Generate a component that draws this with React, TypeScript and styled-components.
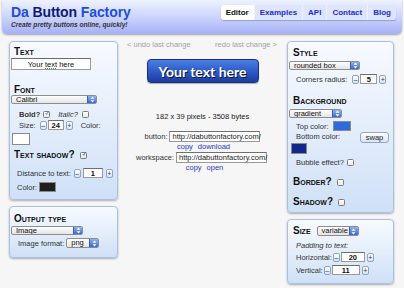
import styled, { createGlobalStyle } from "styled-components";

const GlobalStyle = createGlobalStyle`
  html, body {
    margin: 0;
    padding: 0;
    background: #f6f6f6;
  }
  body {
    width: 404px;
    height: 288px;
    overflow: hidden;
    font-family: "Liberation Sans", Arial, sans-serif;
    font-size: 7.5px;
    color: #333;
  }
`;

const Page = styled.div`
  display: flex;
  flex-direction: column;
  width: 404px;
  height: 288px;
`;

const Header = styled.div`
  display: flex;
  justify-content: space-between;
  align-items: flex-start;
  height: 34px;
  margin: 0 2px;
  padding: 0 6px 0 9px;
  box-sizing: border-box;
  border-radius: 0 0 5px 5px;
  background: linear-gradient(to bottom, #eef2ff 0%, #c9d1fb 55%, #a5b0f6 100%);
  box-shadow: 0 1px 2px rgba(0, 0, 0, 0.35);
`;

const Brand = styled.div`
  display: flex;
  flex-direction: column;
  padding-top: 5px;
`;

const Title = styled.div`
  font-size: 14px;
  font-weight: bold;
  line-height: 14px;
  letter-spacing: -0.1px;
`;

const TitleWord = styled.span<{ $dark?: boolean }>`
  color: ${(p) => (p.$dark ? "#0b1c78" : "#1d4fd6")};
`;

const Tagline = styled.div`
  margin-top: 2px;
  font-size: 6.6px;
  font-style: italic;
  font-weight: bold;
  color: #333;
`;

const Nav = styled.div`
  display: flex;
  margin-top: 5px;
  height: 15px;
  border-radius: 3px;
  background: #dfe5ff;
  box-shadow: 0 1px 1px rgba(60, 70, 150, 0.35);
  overflow: hidden;
`;

const Tab = styled.div<{ $active?: boolean }>`
  display: flex;
  align-items: center;
  padding: 0 5px;
  font-size: 8px;
  font-weight: bold;
  color: ${(p) => (p.$active ? "#111" : "#1a2ed0")};
  background: ${(p) => (p.$active ? "#fff" : "transparent")};
  border-left: ${(p) => (p.$active ? "none" : "1px solid #eef1ff")};
`;

const Main = styled.div`
  display: flex;
  align-items: flex-start;
  padding: 7px 10px 0 9px;
`;

const SideCol = styled.div<{ $w: number }>`
  display: flex;
  flex-direction: column;
  gap: 6px;
  width: ${(p) => p.$w}px;
  flex-shrink: 0;
`;

const Panel = styled.div<{ $pb: number }>`
  display: flex;
  flex-direction: column;
  padding-bottom: ${(p) => p.$pb}px;
  border: 1px solid #a9c0e2;
  border-radius: 4px;
  background: linear-gradient(to bottom, #f7faff 0%, #e4eefb 50%, #cfe0f7 100%);
  box-shadow: 0 1px 2px rgba(0, 0, 0, 0.3);
`;

const Heading = styled.div<{ $mt: number; $ml?: number }>`
  display: flex;
  align-items: center;
  gap: 5px;
  height: 10px;
  margin-top: ${(p) => p.$mt}px;
  margin-left: ${(p) => p.$ml ?? 4}px;
  font-size: 10px;
  font-weight: bold;
  font-variant: small-caps;
  line-height: 10px;
  color: #111;
`;

const Row = styled.div<{ $mt: number; $ml: number; $h?: number; $top?: boolean }>`
  display: flex;
  align-items: ${(p) => (p.$top ? "flex-start" : "center")};
  height: ${(p) => p.$h ?? 10}px;
  margin-top: ${(p) => p.$mt}px;
  margin-left: ${(p) => p.$ml}px;
  white-space: nowrap;
`;

const Label = styled.span<{ $bold?: boolean; $italic?: boolean; $mr?: number }>`
  margin-right: ${(p) => p.$mr ?? 3}px;
  font-weight: ${(p) => (p.$bold ? "bold" : "normal")};
  font-style: ${(p) => (p.$italic ? "italic" : "normal")};
  line-height: 9px;
  color: #333;
`;

const TextField = styled.div<{ $w: number; $mt: number; $ml: number }>`
  display: flex;
  align-items: center;
  justify-content: center;
  box-sizing: border-box;
  width: ${(p) => p.$w}px;
  height: 12px;
  margin-top: ${(p) => p.$mt}px;
  margin-left: ${(p) => p.$ml}px;
  background: #fff;
  border: 1px solid #9a9a9a;
  border-top-color: #6d6d6d;
  color: #111;
`;

const Spell = styled.span`
  text-decoration: underline dotted #3a9a3a;
`;

const SelectBox = styled.div<{ $w: number; $h?: number; $mt?: number; $ml?: number }>`
  display: flex;
  align-items: center;
  box-sizing: border-box;
  width: ${(p) => p.$w}px;
  height: ${(p) => p.$h ?? 9}px;
  margin-top: ${(p) => p.$mt ?? 0}px;
  margin-left: ${(p) => p.$ml ?? 0}px;
  border: 1px solid #8d8d8d;
  border-radius: 2px;
  background: linear-gradient(to bottom, #ffffff, #e4e4e4);
  overflow: hidden;
  flex-shrink: 0;
  font-size: 7.5px;
  font-weight: normal;
  font-variant: normal;
`;

const SelectText = styled.span`
  flex: 1;
  padding-left: 4px;
  color: #111;
  line-height: 8px;
`;

const SelectCap = styled.span`
  display: flex;
  align-items: center;
  justify-content: center;
  width: 8px;
  height: 100%;
  background: linear-gradient(to bottom, #8db4f4, #3568d8);
  border-left: 1px solid #3c5fb0;
`;

const StepBtn = styled.span<{ $ml?: number }>`
  display: flex;
  align-items: center;
  justify-content: center;
  box-sizing: border-box;
  width: 7px;
  height: 9px;
  margin-left: ${(p) => p.$ml ?? 0}px;
  border: 1px solid #8fa3c4;
  border-radius: 2px;
  background: linear-gradient(to bottom, #ffffff, #d5e2f4);
  font-size: 7px;
  line-height: 7px;
  color: #334;
`;

const NumBox = styled.span<{ $w: number; $ml?: number }>`
  display: flex;
  align-items: center;
  justify-content: center;
  box-sizing: border-box;
  width: ${(p) => p.$w}px;
  height: 10px;
  margin-left: ${(p) => p.$ml ?? 1}px;
  background: #fff;
  border: 1px solid #9a9a9a;
  border-top-color: #6d6d6d;
  font-weight: bold;
  color: #111;
`;

const Swatch = styled.div<{ $color: string; $w: number; $h: number; $mt?: number; $ml?: number }>`
  box-sizing: border-box;
  width: ${(p) => p.$w}px;
  height: ${(p) => p.$h}px;
  margin-top: ${(p) => p.$mt ?? 0}px;
  margin-left: ${(p) => p.$ml ?? 0}px;
  background: ${(p) => p.$color};
  border: 1px solid #8a8a8a;
  flex-shrink: 0;
`;

const Box = styled.span<{ $ml?: number }>`
  display: flex;
  align-items: center;
  justify-content: center;
  box-sizing: border-box;
  width: 7px;
  height: 7px;
  margin-left: ${(p) => p.$ml ?? 0}px;
  border: 1px solid #7d7d7d;
  border-radius: 1.5px;
  background: linear-gradient(to bottom, #ffffff, #e8e8e8);
  overflow: visible;
  flex-shrink: 0;
`;

const SwapButton = styled.span`
  display: flex;
  align-items: center;
  justify-content: center;
  box-sizing: border-box;
  width: 29px;
  height: 11px;
  margin-left: auto;
  margin-right: 4px;
  border: 1px solid #94a6c6;
  border-radius: 3px;
  background: linear-gradient(to bottom, #ffffff, #d6e3f6);
  color: #222;
  font-size: 7.5px;
`;

const Center = styled.div`
  display: flex;
  flex-direction: column;
  align-items: center;
  flex: 1;
`;

const UndoBar = styled.div`
  display: flex;
  justify-content: space-between;
  align-self: stretch;
  height: 8px;
  padding: 0 10px 0 9px;
  line-height: 8px;
  color: #a3a3a3;
`;

const BigButton = styled.div`
  display: flex;
  align-items: center;
  justify-content: center;
  box-sizing: border-box;
  width: 112px;
  height: 24px;
  margin-top: 10px;
  border: 1px solid #1b2f86;
  border-radius: 4px;
  background: linear-gradient(to bottom, #4a7fe2 0%, #2f5cc8 50%, #1c3c9c 100%);
  box-shadow: 0 1px 1px rgba(0, 0, 0, 0.3);
  font-family: Lato, "Open Sans", sans-serif;
  font-size: 14px;
  font-weight: bold;
  color: #fff;
  text-shadow: 1px 1px 0 #0b1540;
`;

const Info = styled.div`
  margin-top: 29px;
  height: 10px;
  line-height: 10px;
  color: #222;
`;

const UrlRow = styled.div<{ $mt: number; $shift?: number }>`
  display: flex;
  align-items: center;
  gap: 2px;
  height: 11px;
  margin-top: ${(p) => p.$mt}px;
  transform: translateX(${(p) => p.$shift ?? 0}px);
  white-space: nowrap;
`;

const UrlBox = styled.span`
  display: flex;
  align-items: center;
  box-sizing: border-box;
  width: 91px;
  height: 11px;
  padding-left: 2px;
  background: #fff;
  border: 1px solid #999;
  border-top-color: #707070;
  color: #222;
`;

const LinkRow = styled.div<{ $shift?: number }>`
  display: flex;
  gap: 5px;
  height: 10px;
  line-height: 10px;
  transform: translateX(${(p) => p.$shift ?? 0}px);
`;

const Link = styled.span`
  color: #2536c8;
`;

function Arrows() {
  return (
    <svg width="5" height="7" viewBox="0 0 5 7">
      <path d="M2.5 0.5 L4.5 2.8 L0.5 2.8 Z M2.5 6.5 L4.5 4.2 L0.5 4.2 Z" fill="#fff" />
    </svg>
  );
}

function Select({ text, w, h, mt, ml }: { text: string; w: number; h?: number; mt?: number; ml?: number }) {
  return (
    <SelectBox $w={w} $h={h} $mt={mt} $ml={ml}>
      <SelectText>{text}</SelectText>
      <SelectCap>
        <Arrows />
      </SelectCap>
    </SelectBox>
  );
}

function Check({ on, ml }: { on?: boolean; ml?: number }) {
  return (
    <Box $ml={ml}>
      {on && (
        <svg width="8" height="8" viewBox="0 0 8 8" style={{ marginTop: -2, marginLeft: 1 }}>
          <path d="M1 4.2 L3.2 6.5 L7.2 0.8" stroke="#1d3fb0" strokeWidth="1.5" fill="none" />
        </svg>
      )}
    </Box>
  );
}

function Stepper({ value, w, gap = 1 }: { value: string; w: number; gap?: number }) {
  return (
    <>
      <StepBtn>–</StepBtn>
      <NumBox $w={w} $ml={gap}>{value}</NumBox>
      <StepBtn $ml={gap + 1}>+</StepBtn>
    </>
  );
}

export default function App() {
  return (
    <>
      <GlobalStyle />
      <Page>
        <Header>
          <Brand>
            <Title>
              <TitleWord>Da </TitleWord>
              <TitleWord $dark>Button</TitleWord>
              <TitleWord> Factory</TitleWord>
            </Title>
            <Tagline>Create pretty buttons online, quickly!</Tagline>
          </Brand>
          <Nav>
            <Tab $active>Editor</Tab>
            <Tab>Examples</Tab>
            <Tab>API</Tab>
            <Tab>Contact</Tab>
            <Tab>Blog</Tab>
          </Nav>
        </Header>

        <Main>
          <SideCol $w={109}>
            <Panel $pb={7}>
              <Heading $mt={5}>Text</Heading>
              <TextField $w={80} $mt={1} $ml={1}>
                <span>
                  Your <Spell>text</Spell> here
                </span>
              </TextField>

              <Heading $mt={15}>Font</Heading>
              <Select text="Calibri" w={86} mt={0} ml={1} />
              <Row $mt={5} $ml={9}>
                <Label $bold>Bold?</Label>
                <Check on />
                <Label $italic style={{ marginLeft: 8 }}>Italic?</Label>
                <Check ml={1} />
              </Row>
              <Row $mt={1} $ml={9}>
                <Label $mr={4}>Size:</Label>
                <Stepper value="24" w={16} />
                <Label style={{ marginLeft: 8 }}>Color:</Label>
              </Row>
              <Swatch $color="#fff" $w={18} $h={12} $mt={3} $ml={2} />

              <Heading $mt={5}>
                Text shadow?
                <Check on />
              </Heading>
              <Row $mt={8} $ml={7}>
                <Label $mr={3}>Distance to text:</Label>
                <Stepper value="1" w={20} gap={2} />
              </Row>
              <Row $mt={4} $ml={7}>
                <Label $mr={2}>Color:</Label>
                <Swatch $color="#1f1f1f" $w={17} $h={10} />
              </Row>
            </Panel>

            <Panel $pb={9}>
              <Heading $mt={7}>Output type</Heading>
              <Select text="Image" w={72} mt={2} ml={1} />
              <Row $mt={3} $ml={8}>
                <Label $mr={2}>Image format:</Label>
                <Select text="png" w={33} h={10} />
              </Row>
            </Panel>
          </SideCol>

          <Center>
            <UndoBar>
              <span>&lt; undo last change</span>
              <span>redo last change &gt;</span>
            </UndoBar>
            <BigButton>Your text here</BigButton>
            <Info>182 x 39 pixels - 3508 bytes</Info>
            <UrlRow $mt={9} $shift={0}>
              <Label $mr={0}>button:</Label>
              <UrlBox>http://dabuttonfactory.com/</UrlBox>
            </UrlRow>
            <LinkRow $shift={1}>
              <Link>copy</Link>
              <Link>download</Link>
            </LinkRow>
            <UrlRow $mt={0} $shift={-1}>
              <Label $mr={0}>workspace:</Label>
              <UrlBox>http://dabuttonfactory.com/</UrlBox>
            </UrlRow>
            <LinkRow $shift={2}>
              <Link>copy</Link>
              <Link>open</Link>
            </LinkRow>
          </Center>

          <SideCol $w={107}>
            <Panel $pb={5}>
              <Heading $mt={6} $ml={5}>Style</Heading>
              <Select text="rounded box" w={71} mt={3} ml={1} />
              <Row $mt={4} $ml={8}>
                <Label $mr={5}>Corners radius:</Label>
                <Stepper value="5" w={17} />
              </Row>

              <Heading $mt={12} $ml={5}>Background</Heading>
              <Select text="gradient" w={53} mt={3} ml={1} />
              <Row $mt={3} $ml={8}>
                <Label $mr={4}>Top color:</Label>
                <Swatch $color="#2f6ad8" $w={18} $h={10} />
              </Row>
              <Row $mt={1} $ml={8} $h={11} $top>
                <Label>Bottom color:</Label>
                <SwapButton>swap</SwapButton>
              </Row>
              <Swatch $color="#13268a" $w={16} $h={11} $ml={3} />
              <Row $mt={3} $ml={8}>
                <Label $mr={3}>Bubble effect?</Label>
                <Check />
              </Row>

              <Heading $mt={10} $ml={5}>
                Border?
                <Check />
              </Heading>
              <Heading $mt={10} $ml={5}>
                Shadow?
                <Check />
              </Heading>
            </Panel>

            <Panel $pb={8}>
              <Heading $mt={6} $ml={5}>
                Size
                <Select text="variable" w={42} h={10} ml={1} />
              </Heading>
              <Row $mt={4} $ml={8}>
                <Label $italic>Padding to text:</Label>
              </Row>
              <Row $mt={2} $ml={8}>
                <Label $mr={1}>Horizontal:</Label>
                <Stepper value="20" w={24} gap={1} />
              </Row>
              <Row $mt={3} $ml={8}>
                <Label $mr={1}>Vertical:</Label>
                <Stepper value="11" w={28} gap={1} />
              </Row>
            </Panel>
          </SideCol>
        </Main>
      </Page>
    </>
  );
}
